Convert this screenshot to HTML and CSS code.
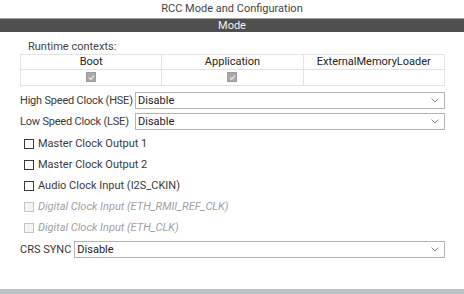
FILE: index.html
```html
<!DOCTYPE html>
<html>
<head>
<meta charset="utf-8">
<link rel="stylesheet" href="styles.css">
</head>
<body>
<div class="page">
  <div class="title">RCC Mode and Configuration</div>
  <div class="bar">Mode</div>
  <div class="content">
    <div class="rt-label">Runtime contexts:</div>
    <table class="ctx">
      <tr><th>Boot</th><th>Application</th><th>ExternalMemoryLoader</th></tr>
      <tr>
        <td><span class="tick"><svg width="7" height="7" viewBox="0 0 7 7"><path d="M1 3.6 L2.8 5.3 L6 1.6" fill="none" stroke="#eeeeee" stroke-width="1.2"/></svg></span></td>
        <td><span class="tick"><svg width="7" height="7" viewBox="0 0 7 7"><path d="M1 3.6 L2.8 5.3 L6 1.6" fill="none" stroke="#eeeeee" stroke-width="1.2"/></svg></span></td>
        <td></td>
      </tr>
    </table>
    <div class="field first">
      <span class="lbl fixed">High Speed Clock (HSE)</span>
      <div class="select"><span>Disable</span><svg class="chev" width="8" height="5" viewBox="0 0 8 5"><path d="M0.5 0.5 L4 4 L7.5 0.5" fill="none" stroke="#8a8a8a" stroke-width="1"/></svg></div>
    </div>
    <div class="field">
      <span class="lbl fixed">Low Speed Clock (LSE)</span>
      <div class="select"><span>Disable</span><svg class="chev" width="8" height="5" viewBox="0 0 8 5"><path d="M0.5 0.5 L4 4 L7.5 0.5" fill="none" stroke="#8a8a8a" stroke-width="1"/></svg></div>
    </div>
    <div class="checks">
      <div class="chk"><span class="box"></span>Master Clock Output 1</div>
      <div class="chk"><span class="box"></span>Master Clock Output 2</div>
      <div class="chk"><span class="box"></span>Audio Clock Input (I2S_CKIN)</div>
      <div class="chk disabled"><span class="box"></span>Digital Clock Input (ETH_RMII_REF_CLK)</div>
      <div class="chk disabled"><span class="box"></span>Digital Clock Input (ETH_CLK)</div>
    </div>
    <div class="field crs">
      <span class="lbl">CRS SYNC</span>
      <div class="select"><span>Disable</span><svg class="chev" width="8" height="5" viewBox="0 0 8 5"><path d="M0.5 0.5 L4 4 L7.5 0.5" fill="none" stroke="#8a8a8a" stroke-width="1"/></svg></div>
    </div>
  </div>
  <div class="footer"></div>
</div>
</body>
</html>
```
FILE: styles.css
```css
html, body {
  margin: 0;
  padding: 0;
  background: #ffffff;
}
.page {
  width: 464px;
  height: 294px;
  display: flex;
  flex-direction: column;
  font-family: Roboto, "Liberation Sans", Arial, sans-serif;
  font-size: 11px;
  color: #3a3a3a;
  overflow: hidden;
}
.title {
  height: 18px;
  line-height: 17px;
  text-align: center;
  color: #444444;
}
.bar {
  height: 13px;
  line-height: 13px;
  border-top: 1px solid #a3a3a3;
  background: #4f4f4f;
  color: #f2f2f2;
  text-align: center;
}
.content {
  padding: 0 19px 0 20px;
  display: flex;
  flex-direction: column;
}
.rt-label {
  margin-top: 8px;
  height: 13px;
  line-height: 13px;
  padding-left: 8px;
  color: #444444;
}
.ctx {
  margin-top: 1px;
  width: 100%;
  border-collapse: collapse;
  table-layout: fixed;
}
.ctx th, .ctx td {
  border: 1px solid #e2e2e2;
  text-align: center;
  padding: 0;
  font-weight: normal;
}
.ctx th {
  height: 14px;
  line-height: 14px;
  color: #222222;
}
.ctx td {
  height: 15px;
}
.tick {
  display: inline-flex;
  align-items: center;
  justify-content: center;
  width: 8px;
  height: 8px;
  background: #a9a9a9;
  border: 1px solid #9c9c9c;
  vertical-align: middle;
  position: relative;
  top: -1px;
}
.field {
  display: flex;
  align-items: center;
  height: 17px;
  margin-top: 4px;
}
.field.first {
  margin-top: 6px;
}
.field.crs {
  margin-top: 3px;
}
.lbl {
  white-space: nowrap;
  padding-right: 3px;
  flex-shrink: 0;
}
.lbl.fixed {
  width: 115px;
  padding-right: 0;
  letter-spacing: -0.2px;
}
.select {
  flex: 1;
  height: 15px;
  border: 1px solid #b3b3b3;
  background: #ffffff;
  display: flex;
  align-items: center;
  justify-content: space-between;
  padding: 0 5px 0 2px;
  color: #222222;
}
.chev {
  display: block;
}
.checks {
  margin-top: 3px;
  display: flex;
  flex-direction: column;
}
.chk {
  height: 21px;
  display: flex;
  align-items: center;
  padding-left: 4px;
}
.box {
  width: 8px;
  height: 8px;
  border: 1px solid #3a3a3a;
  margin-right: 4px;
  background: #ffffff;
}
.chk.disabled {
  color: #a0a0a0;
  font-style: italic;
}
.chk.disabled .box {
  border-color: #c4c4c4;
  background: #f4f4f4;
}
.footer {
  margin-top: auto;
  height: 5px;
  background: #b8c4cc;
}
```
